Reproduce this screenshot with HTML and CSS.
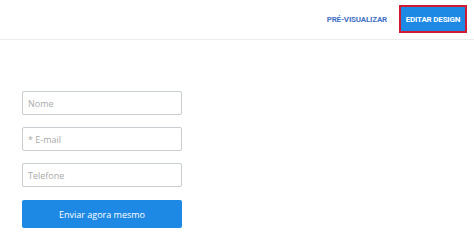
FILE: index.html
```html
<!DOCTYPE html>
<html>
  <head>
    <meta charset="UTF-8">
    <link rel="stylesheet" href="styles.css">
    <title>Formulário</title>
  </head>
  <body>
    <header class="topbar">
      <a class="preview" href="#">PRÉ-VISUALIZAR</a>
      <a class="edit" href="#">EDITAR DESIGN</a>
    </header>
    <form class="form">
      <input class="field" type="text" placeholder="Nome">
      <input class="field" type="text" placeholder="* E-mail">
      <input class="field" type="text" placeholder="Telefone">
      <button class="send" type="button">Enviar agora mesmo</button>
    </form>
  </body>
</html>
```
FILE: styles.css
```css
body {
  margin: 0;
  background: #fff;
  font-family: "Open Sans", sans-serif;
}
.topbar {
  height: 40px;
  border-bottom: 1px solid #ececec;
  display: flex;
  justify-content: flex-end;
  align-items: flex-start;
  padding-right: 7px;
  box-sizing: border-box;
}
.preview {
  font-family: Roboto, sans-serif;
  font-size: 8px;
  font-weight: bold;
  letter-spacing: -0.2px;
  color: #4573c6;
  text-decoration: none;
  margin-top: 15px;
  margin-right: 12px;
}
.edit {
  margin-top: 5px;
  width: 68px;
  height: 28px;
  box-sizing: border-box;
  border: 2px solid #cf1a32;
  background: #1e88e5;
  color: #fff;
  font-family: Roboto, sans-serif;
  font-size: 8px;
  font-weight: bold;
  letter-spacing: -0.2px;
  text-decoration: none;
  display: flex;
  align-items: center;
  justify-content: center;
}
.form {
  display: flex;
  flex-direction: column;
  width: 160px;
  margin: 51px 0 0 22px;
}
.field {
  height: 24px;
  box-sizing: border-box;
  border: 1px solid #c9cdd2;
  border-radius: 2px;
  padding: 0 5px;
  margin-bottom: 12px;
  font-family: "Open Sans", sans-serif;
  font-size: 9px;
  color: #333;
}
.field::placeholder {
  color: #a9a9a9;
}
.send {
  margin-top: 1px;
  height: 28px;
  border: none;
  border-radius: 2px;
  background: #1e88e5;
  color: #fff;
  font-family: "Open Sans", sans-serif;
  font-size: 9px;
}
```
